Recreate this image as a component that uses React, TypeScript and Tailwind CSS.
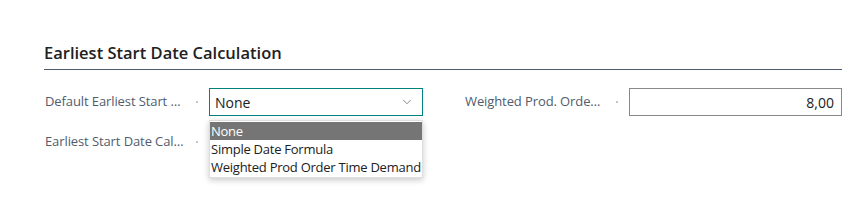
import { ChevronDown } from 'lucide-react';

const font = { fontFamily: '"Open Sans", "Liberation Sans", sans-serif' };

function Dot() {
  return <span className="ml-[11px] mr-[11px] h-[2px] w-[2px] shrink-0 bg-[#c8c6c4]" />;
}

function FieldLabel({ text }: { text: string }) {
  return (
    <div className="flex w-[165px] shrink-0 items-center pl-px">
      <span className="w-[140px] truncate text-[13px] tracking-[-0.1px] text-[#505c6d]">{text}</span>
      <Dot />
    </div>
  );
}

export default function App() {
  return (
    <div className="h-[200px] w-[855px] bg-white pl-[44px] pr-[13px] pt-[42px]" style={font}>
      <h2 className="border-b border-[#505c6d] pb-[5px] text-[16.5px] font-semibold leading-[22px] text-[#212121]">
        Earliest Start Date Calculation
      </h2>

      <div className="mt-[18px] grid grid-cols-[379px_378px] gap-x-[41px]">
        <div className="flex flex-col gap-[12px]">
          <div className="flex h-[28px] items-center">
            <FieldLabel text="Default Earliest Start Date Calculated" />
            <div className="relative flex-1">
              <div className="flex h-[28px] items-center justify-between border border-[#00827f] pl-[5px] pr-[8px]">
                <span className="text-[14px] text-[#212121]">None</span>
                <ChevronDown className="h-[14px] w-[14px] text-[#605e5c]" strokeWidth={1.25} />
              </div>
              <ul className="absolute left-0 right-0 top-[32px] z-10 whitespace-nowrap border border-[#e1dfdd] bg-white py-[1px] text-[13px] leading-[18px] tracking-[-0.25px] text-[#212121] shadow-[0_2px_6px_rgba(0,0,0,0.22)]">
                <li className="bg-[#757575] px-[1px] text-white">None</li>
                <li className="px-[1px]">Simple Date Formula</li>
                <li className="px-[1px]">Weighted Prod Order Time Demand</li>
              </ul>
            </div>
          </div>
          <div className="flex h-[28px] items-center">
            <FieldLabel text="Earliest Start Date Calculation Method" />
          </div>
        </div>

        <div className="flex flex-col">
          <div className="flex h-[28px] items-center">
            <FieldLabel text="Weighted Prod. Order Time Demand" />
            <div className="flex h-[28px] flex-1 items-center justify-end border border-[#8a8886] pr-[7px] text-[14px] text-[#212121]">
              8,00
            </div>
          </div>
        </div>
      </div>
    </div>
  );
}
